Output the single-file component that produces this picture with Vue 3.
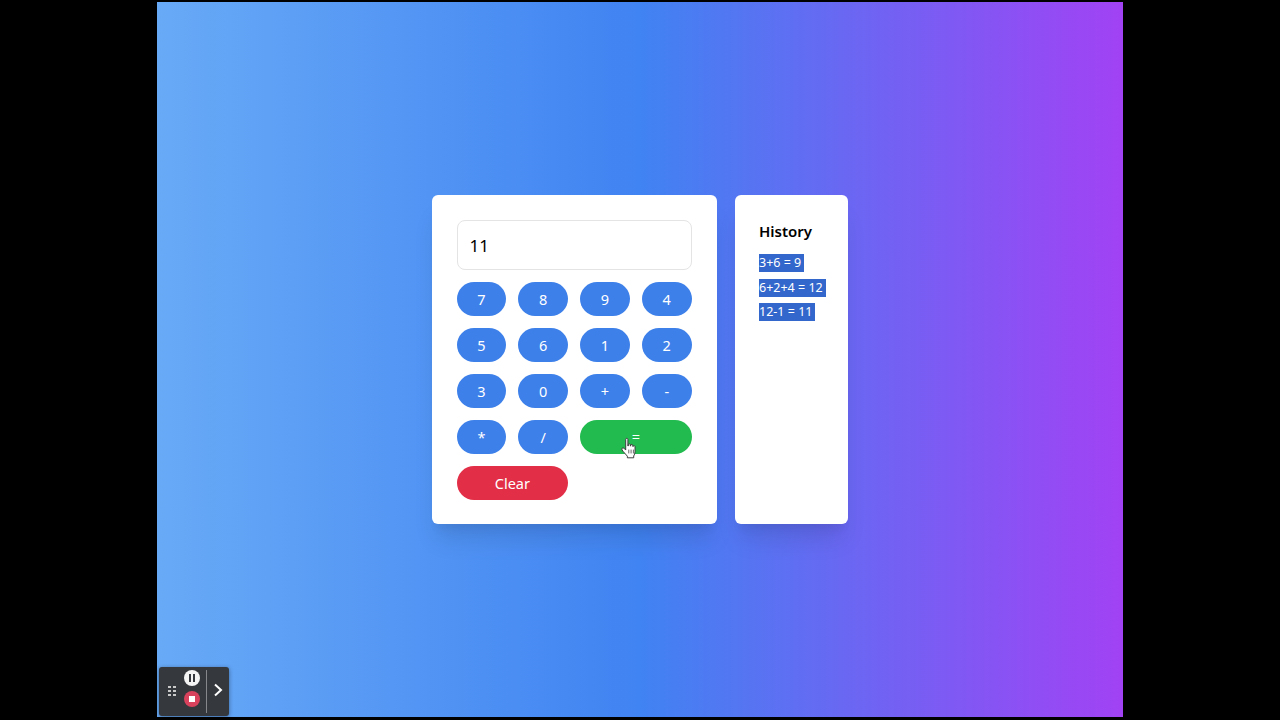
<script setup>
import { ref } from 'vue'

const display = ref('11')

const keys = ['7', '8', '9', '4', '5', '6', '1', '2', '3', '0', '+', '-', '*', '/']
const history = ref(['3+6 = 9', '6+2+4 = 12', '12-1 = 11'])
</script>

<template>
  <div class="screen">
    <div class="stage">
      <div class="calculator card">
        <input class="display" type="text" v-model="display" readonly />
        <div class="keys">
          <button v-for="key in keys" :key="key" class="key">{{ key }}</button>
          <button class="key equals">
            <span class="equals-sign">=</span>
            <svg class="cursor" viewBox="0 0 16 21" width="18" height="23">
              <path
                d="M5 2.2c0-1.3 2-1.3 2 0v6l.4-.1V7c0-1 1.7-1 1.8 0v1.2l.4.1v-.8c0-1 1.7-1 1.8 0v1l.4.1c0-.9 1.7-.9 1.7.2v4.7c0 1.7-.5 2.700-1.200 3.800v1.700H6.500v-1.500C5.500 16.300 4 14.800 2.500 13c-1.600-1.900-1.300-3 .1-3 .8 0 1.600 1 2.400 1.900z"
                fill="#fff"
                stroke="#3a3a3a"
                stroke-width="0.9"
                stroke-linejoin="round"
              />
              <path d="M7.800 11.500v3.500M9.900 11.500v3.500M12 11.500v3.500" stroke="#3a3a3a" stroke-width="0.7" fill="none" />
            </svg>
          </button>
          <button class="key clear">Clear</button>
        </div>
      </div>

      <div class="history card">
        <h3>History</h3>
        <ul>
          <li v-for="item in history" :key="item"><span>{{ item }}</span></li>
        </ul>
      </div>

      <!-- screen recorder toolbar -->
      <div class="recorder">
        <div class="grip">
          <i v-for="n in 6" :key="n"></i>
        </div>
        <div class="controls">
          <span class="pause"><b></b><b></b></span>
          <span class="stop"><b></b></span>
        </div>
        <div class="divider"></div>
        <svg class="chevron" viewBox="0 0 10 14" width="10" height="14">
          <path d="M2 1.500 8 7l-6 5.500" fill="none" stroke="#fff" stroke-width="2" />
        </svg>
      </div>
    </div>
  </div>
</template>

<style>
html,
body {
  margin: 0;
  background: #000;
}
</style>

<style scoped>
.screen {
  width: 1280px;
  height: 720px;
  padding: 2px 157px 3px;
  box-sizing: border-box;
  background: #000;
  overflow: hidden;
  font-family: "Noto Sans", "Open Sans", sans-serif;
}
.stage {
  position: relative;
  height: 100%;
  display: flex;
  align-items: center;
  justify-content: center;
  gap: 18px;
  background: linear-gradient(90deg, #68aaf6 0%, #4083f2 50%, #a142f4 100%);
}
.card {
  height: 329px;
  box-sizing: border-box;
  padding: 25px 25.400px 25px 24.600px;
  background: #fff;
  border-radius: 6px;
  box-shadow: 0 20px 25px -5px rgba(0, 0, 0, 0.1), 0 10px 10px -5px rgba(0, 0, 0, 0.05);
}
.calculator {
  width: 285px;
}
.display {
  display: block;
  width: 100%;
  height: 50px;
  box-sizing: border-box;
  margin-bottom: 13px;
  padding: 0 12px;
  border: 1px solid #e4e4e4;
  border-radius: 8px;
  outline: none;
  font-family: inherit;
  font-size: 17px;
  color: #000;
}
.keys {
  display: grid;
  grid-template-columns: repeat(4, 1fr);
  grid-auto-rows: 34px;
  gap: 12px;
  margin-top: -1px;
}
.key {
  position: relative;
  padding: 0;
  border: none;
  border-radius: 17px;
  background: #3d80ea;
  color: #fff;
  font-family: inherit;
  font-size: 14.500px;
  cursor: pointer;
}
.equals {
  grid-column: span 2;
  background: #22bb4f;
}
.equals-sign {
  position: relative;
  top: -1px;
}
.clear {
  grid-column: span 2;
  background: #e22f47;
}
.cursor {
  position: absolute;
  left: 40px;
  top: 17px;
}
.history {
  width: 113px;
  padding: 25px 0 25px 24px;
}
.history h3 {
  margin: 0 0 12px;
  font-size: 15px;
  line-height: 22px;
  font-weight: 600;
  color: #000;
}
.history ul {
  margin: 0;
  padding: 0;
  list-style: none;
}
.history li {
  height: 18px;
  margin-bottom: 6.500px;
  line-height: 18px;
  font-size: 12.500px;
  white-space: nowrap;
}
.history li span {
  display: inline-block;
  padding-right: 3px;
  background: #3367cc;
  color: #fff;
}
.recorder {
  position: absolute;
  left: 2px;
  bottom: 1px;
  width: 70px;
  height: 49px;
  display: flex;
  align-items: center;
  box-sizing: border-box;
  border-radius: 3px;
  background: #35383d;
  box-shadow: 0 1px 4px rgba(0, 0, 0, 0.4);
}
.grip {
  display: grid;
  grid-template-columns: 3px 3px;
  grid-auto-rows: 2px;
  gap: 2px;
  margin: 0 0 2px 9px;
}
.grip i {
  background: #c9c9c9;
}
.controls {
  display: flex;
  flex-direction: column;
  align-items: center;
  gap: 5px;
  margin: 0 0 6px 8px;
}
.pause,
.stop {
  width: 16px;
  height: 16px;
  border-radius: 50%;
  display: flex;
  align-items: center;
  justify-content: center;
}
.pause {
  gap: 2px;
  background: #f4f4f4;
}
.pause b {
  width: 2px;
  height: 8px;
  background: #35383d;
}
.stop {
  background: #d9425c;
}
.stop b {
  width: 6px;
  height: 6px;
  background: #fff;
}
.divider {
  width: 1px;
  height: 43px;
  margin-left: 6px;
  background: #85878a;
}
.chevron {
  margin-left: 6px;
  margin-bottom: 4px;
}
</style>
